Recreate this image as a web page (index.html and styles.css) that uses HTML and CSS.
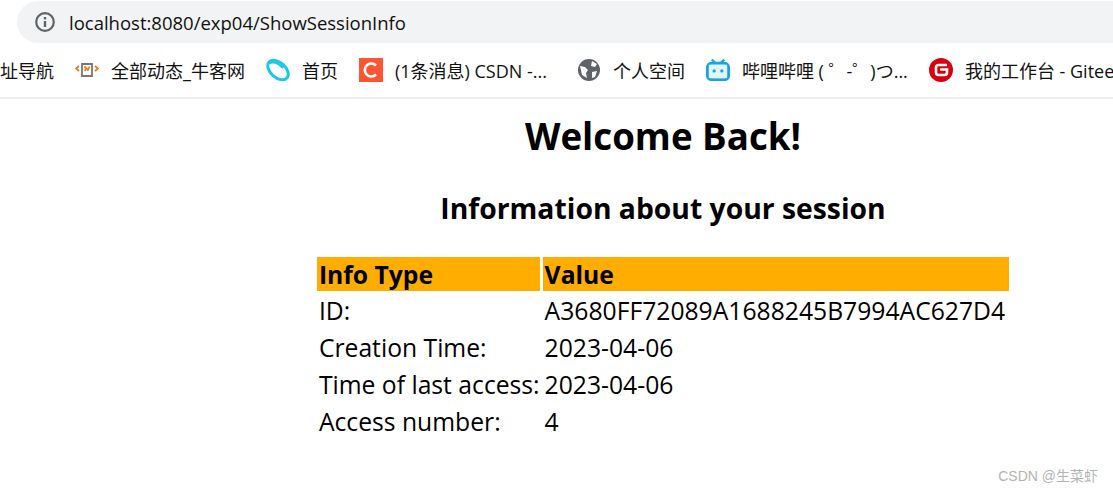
FILE: index.html
```html
<!DOCTYPE html>
<html lang="en">
<head>
    <meta charset="UTF-8">
    <title>ShowSessionInfo</title>
    <link rel="stylesheet" href="styles.css">
</head>
<body>

    <div class="address-row">
        <div class="address-bar">
            <svg class="info-icon" width="22" height="22" viewBox="0 0 22 22">
                <circle cx="11" cy="11" r="8.8" fill="none" stroke="#5f6368" stroke-width="2.2"/>
                <rect x="9.800" y="10" width="2.400" height="6" fill="#5f6368"/>
                <rect x="9.800" y="6" width="2.400" height="2.400" fill="#5f6368"/>
            </svg>
            <span>localhost:8080/exp04/ShowSessionInfo</span>
        </div>
    </div>

    <nav class="bookmarks">
        <a class="first">址导航</a>
        <a>
            <svg width="24" height="24" viewBox="0 0 24 24">
                <path d="M7 6h10v12H7z" fill="none" stroke="#777" stroke-width="1.800"/>
                <path d="M4 8l-3 2.500 3 2.500M20 8l3 2.500-3 2.500M9.500 13l2-2.500-2-2M14.500 8.500l-2 4.500" fill="none" stroke="#ee7a22" stroke-width="1.800"/>
            </svg>
            全部动态_牛客网
        </a>
        <a>
            <svg width="24" height="26" viewBox="0 0 24 26">
                <ellipse cx="12" cy="13" rx="12" ry="7.500" transform="rotate(42 12 13)" fill="none" stroke="#1cc8e3" stroke-width="3"/>
                <path d="M3 6q7-3 14 5" fill="none" stroke="#1cc8e3" stroke-width="2.500"/>
            </svg>
            首页
        </a>
        <a class="csdn-link">
            <svg width="24" height="24" viewBox="0 0 24 24">
                <rect width="24" height="24" fill="#fc5531"/>
                <path d="M17 7.500a6.500 6.500 0 1 0 0 9" fill="none" stroke="#fff" stroke-width="2.600"/>
            </svg>
            (1条消息) CSDN -...
        </a>
        <a>
            <svg width="24" height="24" viewBox="0 0 24 24">
                <circle cx="12" cy="12" r="11" fill="#5f6368"/>
                <path d="M3 8l5 1 3 3-2 3 1 5-5-3zM15 3l5 3-2 3-4-1zM15 14l5-1-2 6-3 1z" fill="#fff"/>
            </svg>
            个人空间
        </a>
        <a class="bili-link">
            <svg width="24" height="24" viewBox="0 0 25 24">
                <path d="M6 1l4 4M19 1l-4 4" stroke="#17a6dc" stroke-width="2.400"/>
                <rect x="1.500" y="5" width="22" height="17" rx="4" fill="none" stroke="#17a6dc" stroke-width="3"/>
                <rect x="3" y="6.500" width="19" height="14" fill="#e3f5fc"/>
                <circle cx="8.500" cy="13" r="1.700" fill="#17a6dc"/>
                <circle cx="16.500" cy="13" r="1.700" fill="#17a6dc"/>
            </svg>
            哔哩哔哩 ( ゜-゜)つ...
        </a>
        <a>
            <svg width="24" height="24" viewBox="0 0 24 24">
                <circle cx="12" cy="12" r="12" fill="#d7000f"/>
                <path d="M18 7H9.500a2.500 2.500 0 0 0-2.500 2.500v5A2.500 2.500 0 0 0 9.500 17h6a2.500 2.500 0 0 0 2.500-2.500V11.500h-7" fill="none" stroke="#fff" stroke-width="2.600"/>
            </svg>
            我的工作台 - Gitee
        </a>
    </nav>

    <main class="page">
        <h1>Welcome Back!</h1>
        <h2>Information about your session</h2>
        <table class="session-table">
            <tr>
                <th>Info Type</th>
                <th>Value</th>
            </tr>
            <tr>
                <td>ID:</td>
                <td>A3680FF72089A1688245B7994AC627D4</td>
            </tr>
            <tr>
                <td>Creation Time:</td>
                <td>2023-04-06</td>
            </tr>
            <tr>
                <td>Time of last access:</td>
                <td>2023-04-06</td>
            </tr>
            <tr>
                <td>Access number:</td>
                <td>4</td>
            </tr>
        </table>
    </main>

    <div class="watermark">CSDN @生菜虾</div>

</body>
</html>
```

FILE: styles.css
```css
html, body {
    height: 100%;
}

body {
    font-family: "Open Sans", "Noto Sans CJK SC", sans-serif;
    margin: 0;
    background-color: #fff;
    color: #000;
    overflow: hidden;
    position: relative;
}

.address-row {
    padding: 1px 0 0 17px;
}

.address-bar {
    display: flex;
    align-items: center;
    gap: 13px;
    height: 42px;
    padding-left: 17px;
    background-color: #f1f3f4;
    border-radius: 21px 0 0 21px;
    font-size: 18.5px;
    color: #111;
}

.bookmarks {
    display: flex;
    align-items: center;
    gap: 21px;
    height: 56px;
    box-sizing: border-box;
    border-bottom: 2px solid #eeeeee;
    font-family: "Open Sans", "Noto Sans CJK SC", sans-serif;
    font-size: 18px;
    white-space: nowrap;
    overflow: hidden;
    color: #111;
}

.bookmarks a {
    display: flex;
    align-items: center;
    gap: 12px;
    flex-shrink: 0;
}

.bookmarks svg {
    flex-shrink: 0;
}

/* truncated titles get a fixed width in the bar */
.bookmarks .csdn-link {
    width: 197px;
}

.bookmarks .bili-link {
    width: 202px;
}

.page {
    padding-left: 213px;
    text-align: center;
}

h1 {
    font-size: 36.7px;
    line-height: 48px;
    margin: 13px 0 0;
}

h2 {
    font-size: 28.3px;
    line-height: 38px;
    margin: 29px 0 0;
}

.session-table {
    margin: 30px auto 0;
    border-spacing: 3px 0;
    border-collapse: separate;
    font-size: 24.7px;
    text-align: left;
}

.session-table th {
    background-color: #ffad00;
    height: 34px;
    padding: 0 0 0 2px;
    font-weight: bold;
}

.session-table td {
    height: 36px;
    padding: 1px 0 0 2px;
}

.session-table th:last-child,
.session-table td:last-child {
    padding-right: 4px;
}

.watermark {
    position: absolute;
    right: 15px;
    bottom: 7px;
    font-family: "Liberation Sans", "Noto Sans CJK SC", sans-serif;
    font-size: 14px;
    color: #b4b4b4;
}
```
